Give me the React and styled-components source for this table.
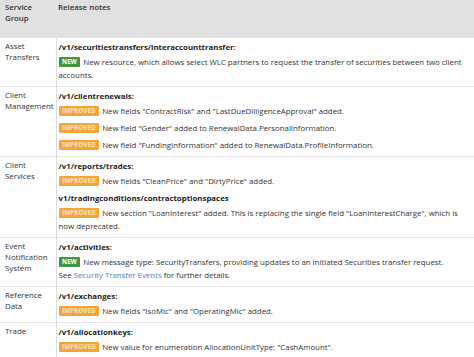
import React from 'react';
import styled, { createGlobalStyle } from "styled-components";

const GlobalStyle = createGlobalStyle`
    body {
        margin: 0;
        background: #ffffff;
        font-family: "Open Sans", "Liberation Sans", sans-serif;
        color: #333333;
    }
`;

const rows = [
    {
        group: ["Asset", "Transfers"],
        blocks: [
            {
                path: "/v1/securitiestransfers/interaccounttransfer:",
                notes: [
                    { kind: "new", text: "New resource, which allows select WLC partners to request the transfer of securities between two client accounts." },
                ],
            },
        ],
    },
    {
        group: ["Client", "Management"],
        blocks: [
            {
                path: "/v1/clientrenewals:",
                notes: [
                    { kind: "improved", text: 'New fields "ContractRisk" and "LastDueDilligenceApproval" added.' },
                    { kind: "improved", text: 'New field "Gender" added to RenewalData.PersonalInformation.' },
                    { kind: "improved", text: 'New field "FundingInformation" added to RenewalData.ProfileInformation.' },
                ],
            },
        ],
    },
    {
        group: ["Client", "Services"],
        blocks: [
            {
                path: "/v1/reports/trades:",
                notes: [
                    { kind: "improved", text: 'New fields "CleanPrice" and "DirtyPrice" added.' },
                ],
            },
            {
                path: "v1/tradingconditions/contractoptionspaces",
                notes: [
                    { kind: "improved", text: 'New section "LoanInterest" added. This is replacing the single field "LoanInterestCharge", which is now deprecated.' },
                ],
            },
        ],
    },
    {
        group: ["Event", "Notification", "System"],
        blocks: [
            {
                path: "/v1/activities:",
                notes: [
                    {
                        kind: "new",
                        text: "New message type: SecurityTransfers, providing updates to an initiated Securities transfer request.",
                        link: true,
                    },
                ],
            },
        ],
    },
    {
        group: ["Reference", "Data"],
        blocks: [
            {
                path: "/v1/exchanges:",
                notes: [
                    { kind: "improved", text: 'New fields "IsoMic" and "OperatingMic" added.' },
                ],
            },
        ],
    },
    {
        group: ["Trade"],
        blocks: [
            {
                path: "/v1/allocationkeys:",
                notes: [
                    { kind: "improved", text: 'New value for enumeration AllocationUnitType: "CashAmount".' },
                ],
            },
        ],
    },
];

const App = () => {
    return (
        <>
            <GlobalStyle />
            <Table>
                <colgroup>
                    <col style={{ width: 56 }} />
                    <col />
                </colgroup>
                <thead>
                    <tr>
                        <HeadCell>Service<br />Group</HeadCell>
                        <HeadCell $notes>Release notes</HeadCell>
                    </tr>
                </thead>
                <tbody>
                    {rows.map((row, i) => (
                        <Row key={i}>
                            <GroupCell>
                                {row.group.map((g, j) => (
                                    <React.Fragment key={j}>{g}{j < row.group.length - 1 && <br />}</React.Fragment>
                                ))}
                            </GroupCell>
                            <NotesCell>
                                {row.blocks.map((b, j) => (
                                    <React.Fragment key={j}>
                                        <Path>{b.path}</Path>
                                        {b.notes.map((n, k) => (
                                            <Note key={k}>
                                                <Badge $kind={n.kind}>{n.kind === "new" ? "New" : "Improved"}</Badge>
                                                {n.text}
                                                {n.link && (
                                                    <>
                                                        <br />
                                                        See <DocLink href="#">Security Transfer Events</DocLink> for further details.
                                                    </>
                                                )}
                                            </Note>
                                        ))}
                                    </React.Fragment>
                                ))}
                            </NotesCell>
                        </Row>
                    ))}
                </tbody>
            </Table>
        </>
    )
}

export default App;

const Table = styled.table`
    width: 100%;
    border-collapse: collapse;
    table-layout: fixed;
    font-size: 7.85px;
`;

const HeadCell = styled.th`
    height: 37px;
    box-sizing: border-box;
    background: #e1e1e1;
    text-align: left;
    vertical-align: top;
    font-weight: 600;
    line-height: 11px;
    padding: 2px 0 0 ${p => p.$notes ? "2px" : "5px"};
    color: #333333;
`;

const Row = styled.tr`
    border-top: 1px solid #e6e6e6;
`;

const GroupCell = styled.td`
    vertical-align: top;
    line-height: 11px;
    padding: 3px 2px 0 5px;
    border-right: 1px solid #dcdcdc;
`;

const NotesCell = styled.td`
    vertical-align: top;
    padding: 3px 4px 4px 2px;
    p:last-child{
        margin-bottom: 0;
    }
`;

const Path = styled.p`
    margin: 0 0 3px;
    font-weight: 700;
    line-height: 12px;
    color: #222222;
`;

const Note = styled.p`
    margin: 0 0 4px;
    line-height: 13px;
`;

const Badge = styled.span`
    display: inline-block;
    height: 10px;
    line-height: 10px;
    padding: 0 3.5px;
    margin-right: 3px;
    border-radius: 1px;
    font-size: 6.2px;
    font-weight: 700;
    letter-spacing: 0.1px;
    text-transform: uppercase;
    vertical-align: middle;
    color: ${p => p.$kind === "new" ? "#ffffff" : "#fde3b8"};
    background: ${p => p.$kind === "new" ? "#43963f" : "#f2a63a"};
`;

const DocLink = styled.a`
    color: #3d8ad8;
    text-decoration: none;
`;
